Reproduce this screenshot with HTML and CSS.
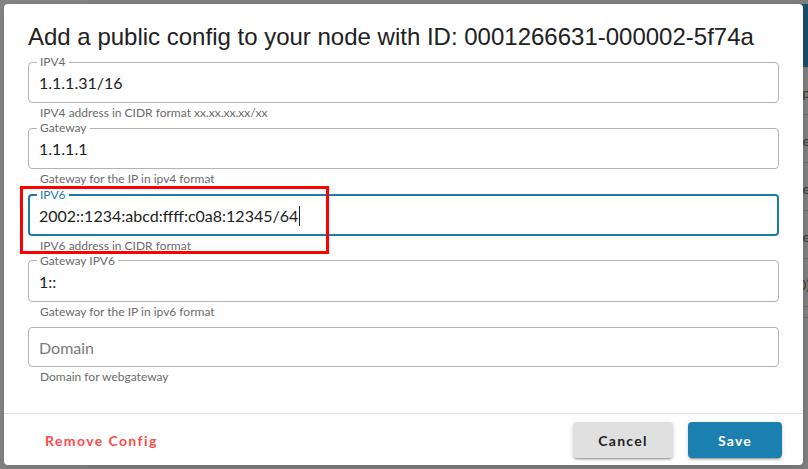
FILE: index.html
```html
<!DOCTYPE html>
<html lang="en">
<head>
<meta charset="utf-8">
<title>Public config</title>
<link rel="stylesheet" href="styles.css">
</head>
<body>
<div class="page">
  <aside class="page-side"></aside>
  <main class="page-main">
    <div class="page-header"></div>
    <div class="page-table">
      <div class="row"><span class="cell">Setup</span></div>
      <div class="row"><span class="cell">Node</span></div>
      <div class="row"><span class="cell">Node</span></div>
      <div class="row"><span class="cell">Node</span></div>
      <div class="row"><span class="cell">(0)</span></div>
      <div class="row row-foot"></div>
    </div>
  </main>
</div>

<div class="dialog">
  <h1 class="dialog-title">Add a public config to your node with ID: 0001266631-000002-5f74a</h1>
  <div class="dialog-body">
    <div class="field">
      <fieldset class="box">
        <legend class="label">IPV4</legend>
        <input class="input" type="text" value="1.1.1.31/16">
      </fieldset>
      <div class="helper">IPV4 address in CIDR format xx.xx.xx.xx/xx</div>
    </div>
    <div class="field">
      <fieldset class="box">
        <legend class="label">Gateway</legend>
        <input class="input" type="text" value="1.1.1.1">
      </fieldset>
      <div class="helper">Gateway for the IP in ipv4 format</div>
    </div>
    <div class="field field-focus">
      <fieldset class="box">
        <legend class="label">IPV6</legend>
        <div class="input input-text">2002::1234:abcd:ffff:c0a8:12345/64<span class="caret"></span></div>
      </fieldset>
      <div class="helper">IPV6 address in CIDR format</div>
      <div class="annotation"></div>
    </div>
    <div class="field">
      <fieldset class="box">
        <legend class="label">Gateway IPV6</legend>
        <input class="input" type="text" value="1::">
      </fieldset>
      <div class="helper">Gateway for the IP in ipv6 format</div>
    </div>
    <div class="field field-empty">
      <fieldset class="box">
        <input class="input" type="text" placeholder="Domain">
      </fieldset>
      <div class="helper">Domain for webgateway</div>
    </div>
  </div>
  <div class="dialog-actions">
    <button class="btn btn-text">Remove Config</button>
    <div class="actions-right">
      <button class="btn btn-cancel">Cancel</button>
      <button class="btn btn-save">Save</button>
    </div>
  </div>
</div>
</body>
</html>
```
FILE: styles.css
```css
* { box-sizing: border-box; }
html, body {
  margin: 0;
  height: 469px;
  overflow: hidden;
}
body {
  background: #808080;
  font-family: Lato, "Open Sans", sans-serif;
  position: relative;
}

/* background page (under the modal overlay) */
.page {
  display: flex;
  height: 469px;
}
.page-side {
  width: 88px;
  background: #838383;
}
.page-main {
  flex: 1;
  padding-top: 4px;
  background: #7e7e7e;
}
.page-header {
  height: 63px;
  background: #1c4e68;
}
.row {
  height: 48px;
  border-bottom: 1px solid #6c6c6c;
  display: flex;
  justify-content: flex-end;
  align-items: center;
  padding-top: 4px;
}
.row-foot { height: 11px; padding-top: 0; }
.cell {
  font-size: 14px;
  color: #3a3a3a;
  margin-right: -2px;
}

/* dialog */
.dialog {
  position: absolute;
  left: 4px;
  top: 4px;
  width: 799px;
  height: 461px;
  background: #fff;
  border-radius: 4px;
  box-shadow: 0 2px 6px rgba(0,0,0,.12);
  display: flex;
  flex-direction: column;
}
.dialog-title {
  margin: 0;
  padding: 17px 24px 0;
  font-family: "Liberation Sans", Arial, sans-serif;
  font-weight: 400;
  font-size: 24px;
  line-height: 32px;
  color: #212121;
  white-space: nowrap;
}
.dialog-body {
  flex: 1;
  padding: 3px 24px 0;
}
.field {
  position: relative;
  height: 66.25px;
}
.box {
  margin: 0;
  border: 1px solid #b3b3b3;
  border-radius: 4px;
  padding: 0 10px 5px;
  min-width: 0;
}
.label {
  font-size: 12px;
  line-height: 12px;
  padding: 0 3px;
  margin-left: -2px;
  color: #6b6b6b;
}
.input {
  display: block;
  width: 100%;
  height: 29px;
  border: 0;
  padding: 0;
  margin: 0;
  outline: none;
  background: transparent;
  font-family: Lato, "Open Sans", sans-serif;
  font-size: 16px;
  line-height: 29px;
  color: #212121;
}
.input::placeholder { color: #7a7a7a; opacity: 1; }
.input-text { white-space: nowrap; }
.caret {
  display: inline-block;
  width: 1px;
  height: 20px;
  background: #222;
  vertical-align: -4px;
  margin-left: 1px;
}
.field-focus .box {
  border: 2px solid #1b7bab;
  padding: 0 9px 4px;
}
.field-focus .label { color: #1b7bab; }
.field-empty .box {
  margin-top: 6px;
  padding: 5px 10px 4px;
}
.helper {
  margin-top: 3px;
  padding-left: 12px;
  font-size: 12px;
  line-height: 14px;
  color: #6b6b6b;
  white-space: nowrap;
}
.annotation {
  position: absolute;
  left: -8px;
  top: -3px;
  width: 309px;
  height: 68px;
  border: 3px solid #ff0000;
  pointer-events: none;
}

/* actions */
.dialog-actions {
  border-top: 1px solid #e0e0e0;
  padding: 8px 21px 7px 25px;
  display: flex;
  align-items: center;
}
.actions-right {
  margin-left: auto;
  display: flex;
  gap: 15px;
}
.btn {
  height: 36px;
  border: 0;
  border-radius: 4px;
  font-family: Lato, "Open Sans", sans-serif;
  font-weight: 700;
  font-size: 14px;
  letter-spacing: 1.25px;
  padding: 0 16px;
  background: transparent;
  cursor: pointer;
}
.btn-text { color: #ff4a4a; letter-spacing: 1.4px; }
.btn-cancel {
  width: 100px;
  background: #e0e0e0;
  color: #212121;
  box-shadow: 0 3px 1px -2px rgba(0,0,0,.2), 0 2px 2px 0 rgba(0,0,0,.14), 0 1px 5px 0 rgba(0,0,0,.12);
}
.btn-save {
  width: 94px;
  background: #1b80b0;
  color: #fff;
  box-shadow: 0 3px 1px -2px rgba(0,0,0,.2), 0 2px 2px 0 rgba(0,0,0,.14), 0 1px 5px 0 rgba(0,0,0,.12);
}
```
